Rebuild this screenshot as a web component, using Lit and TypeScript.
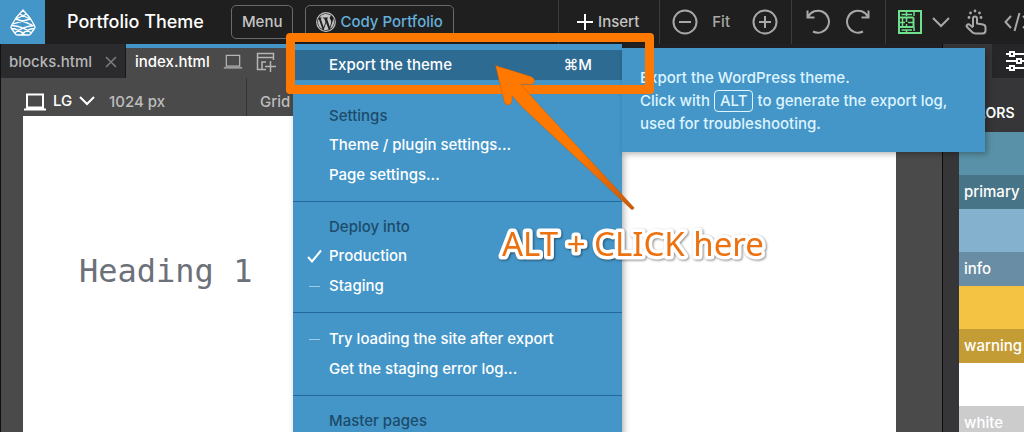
import { LitElement, html, svg, css, nothing } from "lit";
import { customElement } from "lit/decorators.js";
import { classMap } from "lit/directives/class-map.js";

type MenuItem = {
  label: string;
  state?: "on" | "off";
  shortcut?: string;
  active?: boolean;
};
type MenuSection = { title?: string; items: MenuItem[] };

const SECTIONS: MenuSection[] = [
  { items: [{ label: "Export the theme", shortcut: "⌘M", active: true }] },
  {
    title: "Settings",
    items: [{ label: "Theme / plugin settings..." }, { label: "Page settings..." }],
  },
  {
    title: "Deploy into",
    items: [
      { label: "Production", state: "on" },
      { label: "Staging", state: "off" },
    ],
  },
  {
    items: [
      { label: "Try loading the site after export", state: "off" },
      { label: "Get the staging error log..." },
    ],
  },
  { title: "Master pages", items: [] },
];

const laptop = svg`<path d="M4 3.5h16v13H4zM1 18.5h22" />`;

const icon = (w: number, h: number, body: unknown, box = `0 0 ${w} ${h}`) => html`
  <svg class="icon" width=${w} height=${h} viewBox=${box} aria-hidden="true">${body}</svg>
`;

@customElement("top-bar")
class TopBar extends LitElement {
  static styles = css`
    :host {
      display: flex;
      align-items: stretch;
      height: 44px;
      background: #1f1f1f;
      color: #c4c4c4;
      overflow: hidden;
      box-sizing: border-box;
    }
    .icon {
      display: block;
      fill: none;
      stroke: currentColor;
      stroke-width: 2;
      flex: none;
    }
    button {
      font: inherit;
      color: inherit;
      background: none;
      border: 0;
      padding: 0;
      display: flex;
      align-items: center;
    }
    .logo {
      flex: none;
      width: 45px;
      background: #4496c9;
      color: #fff;
      display: grid;
      place-items: center;
    }
    .logo .icon {
      stroke-width: 1.3;
    }
    .title {
      margin: 0 27px 0 22px;
      align-self: center;
      font-size: 18px;
      font-weight: 500;
      line-height: 24px;
      color: #fff;
      white-space: nowrap;
    }
    .actions {
      display: flex;
      align-items: center;
      gap: 12px;
    }
    .boxed {
      height: 34px;
      border: 1px solid #6a6a6a;
      border-radius: 5px;
      padding: 0 10px;
      gap: 4px;
      white-space: nowrap;
    }
    .site {
      color: #64b0dc;
    }
    .site .icon {
      color: #c4c4c4;
    }
    .spacer {
      flex: 1;
    }
    .group {
      flex: none;
      display: flex;
      align-items: center;
      border-left: 1px solid #3c3c3c;
      box-sizing: border-box;
    }
    .insert {
      padding: 0 20px 0 18px;
    }
    .insert button {
      gap: 5px;
    }
    .insert .icon {
      color: #fff;
    }
    .zoom {
      padding: 0 13px 0 12px;
      gap: 14px;
      color: #a8a8a8;
    }
    .fit {
      padding-right: 8px;
    }
    .history {
      padding: 0 14px 0 13px;
      gap: 14px;
      color: #a8a8a8;
    }
    .view {
      width: 139px;
      padding-left: 11px;
      gap: 9px;
      color: #a8a8a8;
      overflow: hidden;
    }
    .green {
      color: #6fe08c;
    }
    .touch {
      margin-left: 6px;
    }
    .code {
      margin-left: 8px;
    }
  `;

  render() {
    return html`
      <div class="logo">
        ${icon(
          26,
          27,
          svg`<path stroke-linejoin="round" d="M13 1Q9 5.500 6 9L1.500 16.500Q.500 18 1.500 19.500L5.500 25Q6 26 7.500 26H18.500Q20 26 20.500 25L24.500 19.500Q25.500 18 24.500 16.500L20 9Q17 5.500 13 1Z
          M9.500 5L20 10M16.500 5L6 10M5.500 10Q14 12 23 16.500M20.500 10Q12 12 3 15M2 16.500Q12 17 21.500 24M24 16.500Q14 17 4.500 24M1.500 19.500Q9 20 15 26M24.500 19.500Q17 20 11 26"/>`,
        )}
      </div>
      <div class="title">Portfolio Theme</div>
      <div class="actions">
        <button class="boxed">Menu</button>
        <button class="boxed site">
          ${icon(
            20,
            20,
            svg`<circle cx="10" cy="10" r="9.300" stroke-width="1.200"/>
            <g fill="currentColor" stroke="none">
              <path d="M2 10a8 8 0 0 0 4.500 7.200L2.700 6.700A8 8 0 0 0 2 10zM10.100 10.700 7.700 17.700a8 8 0 0 0 5 -.1zM17 6.200c.2 1.700-.2 3-.8 4.600L14 17a8 8 0 0 0 3-10.800z"/>
              <path d="M3.300 5.600A8 8 0 0 1 15.400 4.100c-1.200 0-1.700 1-1.700 1.700 0 1.300 1.500 2 1.500 4.200 0 1.200-.5 2.500-.9 3.800l-.5 1.200-2.800-8.600 1-.1v-.7H6.900v.7l1.300.1 1.300 3.500-1.900 5.400L4.700 6.400l1-.1v-.7z"/>
            </g>`,
          )}
          Cody Portfolio
        </button>
      </div>
      <div class="spacer"></div>
      <div class="group insert">
        <button>${icon(16, 16, svg`<path d="M8 0v16M0 8h16"/>`)} Insert</button>
      </div>
      <div class="group zoom">
        <button aria-label="Zoom out">
          ${icon(26, 26, svg`<circle cx="13" cy="13" r="11.500"/><path d="M7 13h12"/>`)}
        </button>
        <button class="fit">Fit</button>
        <button aria-label="Zoom in">
          ${icon(26, 26, svg`<circle cx="13" cy="13" r="11.500"/><path d="M7 13h12M13 7v12"/>`)}
        </button>
      </div>
      <div class="group history">
        <button aria-label="Undo">
          ${icon(26, 26, svg`<path d="M2.500 1.500V8.500H9.500M3 8A11 11 0 1 1 8 22.500"/>`)}
        </button>
        <button aria-label="Redo">
          ${icon(26, 26, svg`<path d="M23.500 1.500V8.500H16.500M23 8A11 11 0 1 0 18 22.500"/>`)}
        </button>
      </div>
      <div class="group view">
        <button class="green" aria-label="Grid overlay">
          ${icon(
            26,
            26,
            svg`<path d="M2 2h22v22H2zM16.500 8.500V18M2 8.500H16.500M2 18H16.500"/><path stroke-width="1.500" stroke-dasharray="4 2" d="M9.500 3v21M17 3v5M17 18v6"/><path stroke-width="1.500" d="M4.500 5.500H15M2 13.500H8M11 13.500H16M4.500 21H15M5.500 8v10"/>`,
          )}
        </button>
        <button aria-label="Grid options">${icon(18, 12, svg`<path d="M1 2l8 8 8-8"/>`)}</button>
        <button class="touch" aria-label="Interact">
          ${icon(
            22,
            26,
            svg`<path stroke-linejoin="round" d="M8 18V9.500a2 2 0 0 1 4 0V14.500L18 15.500Q20.500 16 20.500 18.500V21.500Q20.500 24.500 17.500 24.500H10.500Q8.500 24.500 7 23L2 18Q1 16.500 2.500 15.500Q4 15 5 16L8 18.500"/>
            <g fill="currentColor" stroke="none"><circle cx="4" cy="8.500" r="1.400"/><circle cx="5.500" cy="4" r="1.400"/><circle cx="10" cy="2" r="1.400"/><circle cx="14.500" cy="4" r="1.400"/><circle cx="16" cy="8.500" r="1.400"/></g>`,
          )}
        </button>
        <button class="code" aria-label="Code">
          ${icon(26, 22, svg`<path d="M7 5L1.500 11L7 17M15.500 2L10.500 20M19 5l5.500 6L19 17"/>`)}
        </button>
      </div>
    `;
  }
}

@customElement("theme-menu")
class ThemeMenu extends LitElement {
  static styles = css`
    :host {
      display: block;
      background: #4496c9;
      color: #fff;
      box-shadow: 2px 2px 6px rgba(0, 0, 0, 0.3);
    }
    .section {
      padding: 11px 0;
      border-top: 1px solid #23689a;
    }
    .section.first {
      padding: 6px 0 10px;
      border-top: 0;
    }
    .heading {
      padding-left: 36px;
      line-height: 28px;
      color: #1d4b69;
    }
    .item {
      font: inherit;
      color: inherit;
      background: none;
      border: 0;
      width: 100%;
      height: 30px;
      padding: 0 30px 0 14px;
      display: flex;
      align-items: center;
      text-align: left;
      white-space: nowrap;
    }
    .item.active {
      background: #2e6b92;
    }
    .mark {
      flex: none;
      width: 22px;
      display: flex;
    }
    .mark svg {
      fill: none;
      stroke: #fff;
      stroke-width: 2;
    }
    .mark svg.off {
      stroke: #9ccbe6;
      stroke-width: 1;
    }
    .label {
      flex: 1;
    }
  `;

  private mark(state?: "on" | "off") {
    if (!state) return nothing;
    return state === "on"
      ? html`<svg width="16" height="14" viewBox="0 0 16 14"><path d="M1 8l4 4.500L14 1.500" /></svg>`
      : html`<svg class="off" width="16" height="14" viewBox="0 0 16 14"><path d="M2 7.500h11" /></svg>`;
  }

  render() {
    return SECTIONS.map(
      (section, i) => html`
        <div class=${classMap({ section: true, first: i === 0 })}>
          ${section.title ? html`<div class="heading">${section.title}</div>` : nothing}
          ${section.items.map(
            (item) => html`
              <button class=${classMap({ item: true, active: !!item.active })}>
                <span class="mark">${this.mark(item.state)}</span>
                <span class="label">${item.label}</span>
                ${item.shortcut ? html`<span>${item.shortcut}</span>` : nothing}
              </button>
            `,
          )}
        </div>
      `,
    );
  }
}

@customElement("color-panel")
class ColorPanel extends LitElement {
  static styles = css`
    :host {
      display: block;
      background: #363638;
      border-left: 1px solid #0c0c0c;
      color: #fff;
      overflow: hidden;
    }
    .tabs {
      display: flex;
      justify-content: flex-end;
      height: 34px;
    }
    .tab {
      width: 32px;
      padding: 0 0 0 14px;
      border: 0;
      background: #262628;
      overflow: hidden;
      display: flex;
      align-items: center;
    }
    .tab svg {
      flex: none;
      fill: none;
      stroke: #fff;
      stroke-width: 2;
    }
    .title {
      margin: 0;
      padding: 25px 0 9px 14px;
      font-size: 14px;
      line-height: 20px;
      font-weight: 600;
    }
    .swatches {
      margin-left: 16px;
    }
    .swatch {
      height: 77px;
      display: flex;
      align-items: flex-end;
    }
    .name {
      flex: 1;
      padding-left: 5px;
      line-height: 34px;
      background: rgba(0, 0, 0, 0.2);
    }
    .primary {
      background: #5992a8;
    }
    .info {
      background: #83b1ce;
    }
    .warning {
      background: #f5c344;
    }
    .white {
      background: #fff;
    }
  `;

  render() {
    return html`
      <div class="tabs">
        <button class="tab" aria-label="Properties">
          <svg width="24" height="22" viewBox="0 0 24 22">
            <path d="M0 4h4M8 4h16M0 11h11M15 11h9M0 18h4M8 18h16M4 2h4v4H4zM11 9h4v4h-4zM4 16h4v4H4z" />
          </svg>
        </button>
      </div>
      <h2 class="title">COLORS</h2>
      <div class="swatches">
        ${["primary", "info", "warning", "white"].map(
          (name) => html`<div class="swatch ${name}"><span class="name">${name}</span></div>`,
        )}
      </div>
    `;
  }
}

@customElement("app-root")
class AppRoot extends LitElement {
  static styles = css`
    :host {
      display: flex;
      flex-direction: column;
      position: relative;
      height: 100vh;
      overflow: hidden;
      background: #4a4a4a;
      font: 500 15px/20px Inter, "Noto Sans", sans-serif;
      color: #bdbdbd;
    }
    button,
    select {
      font: inherit;
      color: inherit;
      background: none;
      border: 0;
      padding: 0;
    }
    .icon {
      display: block;
      flex: none;
      fill: none;
      stroke: currentColor;
      stroke-width: 2;
    }
    .body {
      flex: 1;
      min-height: 0;
      display: grid;
      grid-template-columns: minmax(0, 1fr) 82px;
    }
    .work {
      display: flex;
      flex-direction: column;
      border-left: 1px solid #111;
    }
    .tabs {
      display: flex;
      height: 34px;
      background: #232327;
    }
    .tab {
      display: flex;
      align-items: center;
      background: #2b2b2e;
      padding: 0 8px 3px;
      gap: 13px;
      border-right: 1px solid #18181a;
      border-top: 4px solid #2b2b2e;
      color: #b5b5b5;
    }
    .tab.current {
      background: #4a4a4a;
      border-top-color: #4496c9;
      padding: 0 40px 3px 9px;
    }
    .current .name {
      color: #fff;
    }
    .tab .icon {
      stroke-width: 1.5;
    }
    .sizes {
      display: flex;
      align-items: stretch;
      height: 38px;
    }
    .viewport {
      flex: none;
      width: 246px;
      box-sizing: border-box;
      border-right: 1px solid #333;
      padding: 9px 0 0 22px;
      display: flex;
      gap: 6px;
    }
    .picker {
      display: grid;
      grid-template-columns: 42px;
      align-items: center;
      color: #fff;
      height: 28px;
    }
    .width,
    .gridtab,
    .laptop {
      align-self: center;
    }
    .picker select,
    .picker .icon {
      grid-area: 1 / 1;
    }
    .picker select {
      appearance: none;
      width: 42px;
    }
    .picker .icon {
      justify-self: end;
      pointer-events: none;
    }
    .laptop {
      color: #fff;
    }
    .width {
      margin-left: 8px;
    }
    .gridtab {
      padding: 9px 0 0 13px;
    }
    .page {
      flex: 1;
      margin: 0 46px 0 22px;
      background: #fff;
    }
    .page h1 {
      margin: 0;
      padding: 135px 56px 0;
      font: 32px/40px "DejaVu Sans Mono", monospace;
      color: #6c7179;
    }
    .menu {
      position: absolute;
      left: 293px;
      top: 44px;
      width: 329px;
    }
    .tip {
      position: absolute;
      left: 622px;
      top: 48px;
      width: 363px;
      box-sizing: border-box;
      padding: 18px 18px 17px;
      background: #4496c9;
      color: #def4ff;
      line-height: 23px;
      box-shadow: 2px 2px 6px rgba(0, 0, 0, 0.3);
    }
    .tip p {
      margin: 0;
    }
    kbd {
      font: inherit;
      line-height: 20px;
      display: inline-block;
      padding: 0 5px;
      border: 1px solid #def4ff;
      border-radius: 4px;
    }
    .frame {
      position: absolute;
      left: 286px;
      top: 33px;
      width: 368px;
      height: 61px;
      box-sizing: border-box;
      border: 9px solid #ff7800;
      border-radius: 4px;
    }
    .arrow {
      position: absolute;
      left: 490px;
      top: 60px;
    }
    .callout {
      position: absolute;
      left: 492px;
      top: 220px;
      font: 33px "Noto Sans", sans-serif;
      fill: #ec7211;
      stroke: #fff;
      stroke-width: 7px;
      stroke-linejoin: round;
      paint-order: stroke;
      filter: drop-shadow(1px 1px 1px rgba(0, 0, 0, 0.45));
    }
  `;

  render() {
    return html`
      <top-bar></top-bar>
      <div class="body">
        <div class="work">
          <div class="tabs">
            <button class="tab">
              blocks.html ${icon(12, 12, svg`<path stroke-opacity="0.6" d="M1 1l10 10M11 1L1 11"/>`)}
            </button>
            <button class="tab current">
              <span class="name">index.html</span>
              ${icon(20, 17, laptop, "0 2 24 18")}
              ${icon(
                20,
                20,
                svg`<path d="M10 17.500H1.500V1.500H17.500V8M1.500 5.500H17.500M6 17V10H10M14.500 9v11M9 14.500h11"/>`,
              )}
            </button>
          </div>
          <div class="sizes">
            <div class="viewport">
              <span class="laptop">${icon(24, 18, laptop, "0 2 24 18")}</span>
              <label class="picker">
                <select aria-label="Viewport size">
                  <option>LG</option>
                </select>
                ${icon(16, 10, svg`<path d="M1 1l7 7 7-7"/>`)}
              </label>
              <span class="width">1024 px</span>
            </div>
            <span class="gridtab">Grid</span>
          </div>
          <div class="page"><h1>Heading 1</h1></div>
        </div>
        <color-panel></color-panel>
      </div>
      <theme-menu class="menu"></theme-menu>
      <div class="tip" role="tooltip">
        <p>Export the WordPress theme.</p>
        <p>Click with <kbd>ALT</kbd> to generate the export log,</p>
        <p>used for troubleshooting.</p>
      </div>
      <div class="frame"></div>
      <svg class="arrow" width="150" height="156" viewBox="490 60 150 156" aria-hidden="true">
        <defs>
          <linearGradient id="shade" x1="0" y1="0" x2="1" y2="1">
            <stop offset="0" stop-color="#ff7800" />
            <stop offset="0.6" stop-color="#ff7800" />
            <stop offset="1" stop-color="#c9590a" />
          </linearGradient>
        </defs>
        <path
          fill="url(#shade)"
          stroke="#a8530f"
          stroke-opacity="0.6"
          stroke-width="0.6"
          d="M495.500 65.500L531 76.500Q535 78.500 534.500 81.500Q533.500 85 529 84.500L521 84.500L541 107L634 207.500Q634 210 631.500 209.500L522 107L512 95.500L512 101Q511.500 105 508 105Q505 105 504 101Z"
        />
      </svg>
      <svg class="callout" width="280" height="50">
        <text x="10" y="36">ALT + CLICK here</text>
      </svg>
    `;
  }
}
